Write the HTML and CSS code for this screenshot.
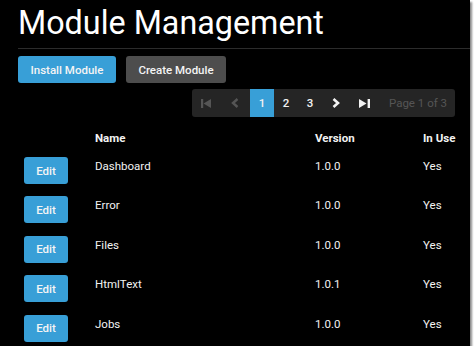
FILE: index.html
```html
<!DOCTYPE html>
<html lang="en">
<head>
    <meta charset="UTF-8">
    <meta name="viewport" content="width=device-width, initial-scale=1.0">
    <link rel="stylesheet" href="styles.css">
    <title>Module Management</title>
</head>
<body>

    <div class="frame">
        <div class="page">
            <h1>Module Management</h1>
            <div class="garis"></div>

            <div class="toolbar">
                <button class="btn btn-biru">Install Module</button>
                <button class="btn btn-abu">Create Module</button>
            </div>

            <div class="pager-wrap">
                <div class="pager">
                    <span class="pg pg-ikon pg-mati">
                        <svg width="10" height="9" viewBox="0 0 10 9"><rect x="0" y="0" width="2.2" height="9" fill="currentColor"/><polygon points="10,0 2.5,4.5 10,9" fill="currentColor"/></svg>
                    </span>
                    <span class="pg pg-ikon pg-mati">
                        <svg width="8" height="10" viewBox="0 0 8 10"><polyline points="6.5,1 2,5 6.5,9" fill="none" stroke="currentColor" stroke-width="2.4"/></svg>
                    </span>
                    <span class="pg pg-angka aktif">1</span>
                    <span class="pg pg-angka">2</span>
                    <span class="pg pg-angka">3</span>
                    <span class="pg pg-ikon pg-next">
                        <svg width="8" height="10" viewBox="0 0 8 10"><polyline points="1.5,1 6,5 1.5,9" fill="none" stroke="currentColor" stroke-width="2.6"/></svg>
                    </span>
                    <span class="pg pg-ikon pg-last">
                        <svg width="11" height="9" viewBox="0 0 11 9"><polygon points="0,0 7.5,4.5 0,9" fill="currentColor"/><rect x="8.6" y="0" width="2.4" height="9" fill="currentColor"/></svg>
                    </span>
                    <span class="pg-teks">Page 1 of 3</span>
                </div>
            </div>

            <table class="tabel">
                <colgroup>
                    <col class="kol-edit">
                    <col class="kol-nama">
                    <col class="kol-versi">
                    <col class="kol-pakai">
                </colgroup>
                <thead>
                    <tr>
                        <th></th>
                        <th>Name</th>
                        <th>Version</th>
                        <th>In Use</th>
                    </tr>
                </thead>
                <tbody>
                    <tr>
                        <td class="sel-edit"><button class="btn btn-biru btn-edit">Edit</button></td>
                        <td>Dashboard</td>
                        <td>1.0.0</td>
                        <td>Yes</td>
                    </tr>
                    <tr>
                        <td class="sel-edit"><button class="btn btn-biru btn-edit">Edit</button></td>
                        <td>Error</td>
                        <td>1.0.0</td>
                        <td>Yes</td>
                    </tr>
                    <tr>
                        <td class="sel-edit"><button class="btn btn-biru btn-edit">Edit</button></td>
                        <td>Files</td>
                        <td>1.0.0</td>
                        <td>Yes</td>
                    </tr>
                    <tr>
                        <td class="sel-edit"><button class="btn btn-biru btn-edit">Edit</button></td>
                        <td>HtmlText</td>
                        <td>1.0.1</td>
                        <td>Yes</td>
                    </tr>
                    <tr>
                        <td class="sel-edit"><button class="btn btn-biru btn-edit">Edit</button></td>
                        <td>Jobs</td>
                        <td>1.0.0</td>
                        <td>Yes</td>
                    </tr>
                </tbody>
            </table>
        </div>
    </div>

</body>
</html>
```

FILE: styles.css
```css
*{
    font-family: Roboto, "Liberation Sans", sans-serif;
    box-sizing: border-box;
}

body{
    margin: 0;
    background-color: white;
}

.frame{
    width: 470px;
    height: 346px;
    background-color: #000;
    overflow: hidden;
    box-shadow: 2px 2px 2px #8a8a8a;
}

.page{
    padding-left: 18px;
}

h1{
    margin: 0;
    padding-top: 3px;
    font-size: 32.3px;
    font-weight: 400;
    line-height: 40px;
    color: #fff;
}

.garis{
    margin-top: 5px;
    border-top: 1px solid #2c2c2c;
}

.toolbar{
    display: flex;
    gap: 10px;
    margin-top: 7px;
}

.btn{
    height: 27px;
    padding: 0 12.5px;
    border: none;
    border-radius: 3px;
    font-size: 11.5px;
    font-weight: 500;
    color: #f4f4f4;
}

.btn-biru{
    background-color: #389fd7;
}

.btn-abu{
    background-color: #4d4d4d;
}

.pager-wrap{
    display: flex;
    justify-content: flex-end;
    margin-top: 6px;
    padding-right: 15px;
}

.pager{
    display: flex;
    height: 28px;
    background-color: #252525;
    border-radius: 3px;
    overflow: hidden;
}

.pg{
    display: flex;
    align-items: center;
    justify-content: center;
    font-size: 11.5px;
    font-weight: 500;
    color: #f2f2f2;
}

.pg-angka{
    width: 24px;
}

.pg-ikon{
    width: 29px;
}

.pg-next{
    width: 28px;
}

.pg-mati{
    color: #555;
}

.aktif{
    background-color: #389fd7;
}

.pg-teks{
    display: flex;
    align-items: center;
    padding: 0 8px 0 10px;
    font-size: 11.5px;
    color: #555;
}

.tabel{
    margin-top: 7px;
    width: 444px;
    table-layout: fixed;
    border-collapse: collapse;
}

.kol-edit{ width: 71px; }
.kol-nama{ width: 220px; }
.kol-versi{ width: 108px; }
.kol-pakai{ width: 45px; }

.tabel th{
    padding: 6px;
    text-align: left;
    font-size: 11.5px;
    font-weight: 700;
    line-height: 17px;
    color: #f2f2f2;
}

.tabel td{
    padding: 6px 6px 8.4px 6px;
    vertical-align: top;
    font-size: 11.5px;
    line-height: 14px;
    color: #f2f2f2;
}

.tabel td.sel-edit{
    padding-top: 4px;
}

.btn-edit{
    width: 44px;
    padding: 0;
    display: block;
}
```
